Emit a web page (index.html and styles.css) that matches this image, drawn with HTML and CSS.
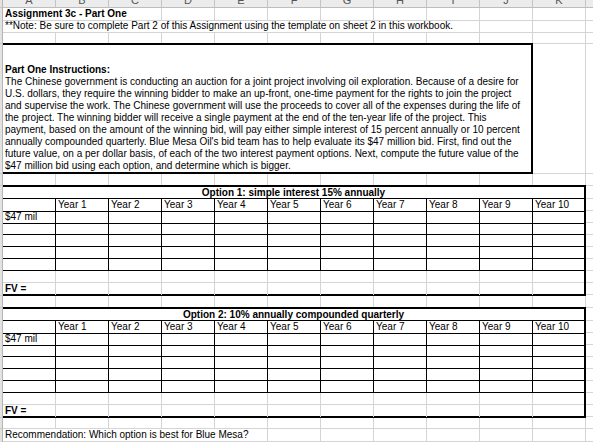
FILE: index.html
```html
<!DOCTYPE html>
<html>
<head>
<meta charset="utf-8">
<title>Assignment 3c - Part One</title>
<link rel="stylesheet" href="styles.css">
</head>
<body>
<div class="sheet">
  <div class="row head">
    <div class="strip"></div>
    <div class="h"><span>A</span></div><div class="h"><span>B</span></div><div class="h"><span>C</span></div><div class="h"><span>D</span></div><div class="h"><span>E</span></div><div class="h"><span>F</span></div><div class="h"><span>G</span></div><div class="h"><span>H</span></div><div class="h"><span>I</span></div><div class="h"><span>J</span></div><div class="h"><span>K</span></div><div class="h last"></div>
  </div>

  <div class="row">
    <div class="strip"></div>
    <div class="c b span3">Assignment 3c - Part One</div>
    <div class="c"></div><div class="c"></div><div class="c"></div><div class="c"></div><div class="c"></div><div class="c"></div><div class="c"></div><div class="c"></div>
    <div class="c last"></div>
  </div>

  <div class="row">
    <div class="strip"></div>
    <div class="c span9">**Note: Be sure to complete Part 2 of this Assignment using the template on sheet 2 in this workbook.</div>
    <div class="c"></div><div class="c"></div>
    <div class="c last"></div>
  </div>

  <div class="row">
    <div class="strip"></div>
    <div class="c"></div><div class="c"></div><div class="c"></div><div class="c"></div><div class="c"></div><div class="c"></div><div class="c"></div><div class="c"></div><div class="c"></div><div class="c"></div><div class="c"></div>
    <div class="c last"></div>
  </div>

  <div class="row boxrow">
    <div class="strip"></div>
    <div class="box span10">
      <div class="ln b">Part One Instructions:</div>
      <div class="ln">The Chinese government is conducting an auction for a joint project involving oil exploration. Because of a desire for</div>
      <div class="ln">U.S. dollars, they require the winning bidder to make an up-front, one-time payment for the rights to join the project</div>
      <div class="ln">and supervise the work. The Chinese government will use the proceeds to cover all of the expenses during the life of</div>
      <div class="ln">the project. The winning bidder will receive a single payment at the end of the ten-year life of the project. This</div>
      <div class="ln">payment, based on the amount of the winning bid, will pay either simple interest of 15 percent annually or 10 percent</div>
      <div class="ln">annually compounded quarterly. Blue Mesa Oil's bid team has to help evaluate its $47 million bid. First, find out the</div>
      <div class="ln">future value, on a per dollar basis, of each of the two interest payment options. Next, compute the future value of the</div>
      <div class="ln">$47 million bid using each option, and determine which is bigger.</div>
    </div>
    <div class="c"></div>
    <div class="c last"></div>
  </div>

  <div class="row">
    <div class="strip"></div>
    <div class="c"></div><div class="c"></div><div class="c"></div><div class="c"></div><div class="c"></div><div class="c"></div><div class="c"></div><div class="c"></div><div class="c"></div><div class="c"></div><div class="c"></div>
    <div class="c last"></div>
  </div>

  <div class="row tblrow">
    <div class="strip"></div>
    <div class="tbl span11">
      <div class="ttl">Option 1: simple interest 15% annually</div>
      <div class="tr"><div class="td"></div><div class="td">Year 1</div><div class="td">Year 2</div><div class="td">Year 3</div><div class="td">Year 4</div><div class="td">Year 5</div><div class="td">Year 6</div><div class="td">Year 7</div><div class="td">Year 8</div><div class="td">Year 9</div><div class="td">Year 10</div></div>
      <div class="tr"><div class="td">$47 mil</div><div class="td"></div><div class="td"></div><div class="td"></div><div class="td"></div><div class="td"></div><div class="td"></div><div class="td"></div><div class="td"></div><div class="td"></div><div class="td"></div></div>
      <div class="tr"><div class="td"></div><div class="td"></div><div class="td"></div><div class="td"></div><div class="td"></div><div class="td"></div><div class="td"></div><div class="td"></div><div class="td"></div><div class="td"></div><div class="td"></div></div>
      <div class="tr"><div class="td"></div><div class="td"></div><div class="td"></div><div class="td"></div><div class="td"></div><div class="td"></div><div class="td"></div><div class="td"></div><div class="td"></div><div class="td"></div><div class="td"></div></div>
      <div class="tr"><div class="td"></div><div class="td"></div><div class="td"></div><div class="td"></div><div class="td"></div><div class="td"></div><div class="td"></div><div class="td"></div><div class="td"></div><div class="td"></div><div class="td"></div></div>
      <div class="tr"><div class="td"></div><div class="td"></div><div class="td"></div><div class="td"></div><div class="td"></div><div class="td"></div><div class="td"></div><div class="td"></div><div class="td"></div><div class="td"></div><div class="td"></div></div>
      <div class="tr grey"><div class="td"></div><div class="td"></div><div class="td"></div><div class="td"></div><div class="td"></div><div class="td"></div><div class="td"></div><div class="td"></div><div class="td"></div><div class="td"></div><div class="td"></div></div>
      <div class="tr grey fv"><div class="td b">FV =</div><div class="td"></div><div class="td"></div><div class="td"></div><div class="td"></div><div class="td"></div><div class="td"></div><div class="td"></div><div class="td"></div><div class="td"></div><div class="td"></div></div>
    </div>
    <div class="lcol">
      <div class="lc first"></div><div class="lc"></div><div class="lc"></div><div class="lc"></div><div class="lc"></div><div class="lc"></div><div class="lc"></div><div class="lc"></div><div class="lc"></div>
    </div>
  </div>

  <div class="row">
    <div class="strip"></div>
    <div class="c"></div><div class="c"></div><div class="c"></div><div class="c"></div><div class="c"></div><div class="c"></div><div class="c"></div><div class="c"></div><div class="c"></div><div class="c"></div><div class="c"></div>
    <div class="c last"></div>
  </div>

  <div class="row tblrow">
    <div class="strip"></div>
    <div class="tbl span11">
      <div class="ttl">Option 2: 10% annually compounded quarterly</div>
      <div class="tr"><div class="td"></div><div class="td">Year 1</div><div class="td">Year 2</div><div class="td">Year 3</div><div class="td">Year 4</div><div class="td">Year 5</div><div class="td">Year 6</div><div class="td">Year 7</div><div class="td">Year 8</div><div class="td">Year 9</div><div class="td">Year 10</div></div>
      <div class="tr"><div class="td">$47 mil</div><div class="td"></div><div class="td"></div><div class="td"></div><div class="td"></div><div class="td"></div><div class="td"></div><div class="td"></div><div class="td"></div><div class="td"></div><div class="td"></div></div>
      <div class="tr"><div class="td"></div><div class="td"></div><div class="td"></div><div class="td"></div><div class="td"></div><div class="td"></div><div class="td"></div><div class="td"></div><div class="td"></div><div class="td"></div><div class="td"></div></div>
      <div class="tr"><div class="td"></div><div class="td"></div><div class="td"></div><div class="td"></div><div class="td"></div><div class="td"></div><div class="td"></div><div class="td"></div><div class="td"></div><div class="td"></div><div class="td"></div></div>
      <div class="tr"><div class="td"></div><div class="td"></div><div class="td"></div><div class="td"></div><div class="td"></div><div class="td"></div><div class="td"></div><div class="td"></div><div class="td"></div><div class="td"></div><div class="td"></div></div>
      <div class="tr"><div class="td"></div><div class="td"></div><div class="td"></div><div class="td"></div><div class="td"></div><div class="td"></div><div class="td"></div><div class="td"></div><div class="td"></div><div class="td"></div><div class="td"></div></div>
      <div class="tr grey"><div class="td"></div><div class="td"></div><div class="td"></div><div class="td"></div><div class="td"></div><div class="td"></div><div class="td"></div><div class="td"></div><div class="td"></div><div class="td"></div><div class="td"></div></div>
      <div class="tr grey fv"><div class="td b">FV =</div><div class="td"></div><div class="td"></div><div class="td"></div><div class="td"></div><div class="td"></div><div class="td"></div><div class="td"></div><div class="td"></div><div class="td"></div><div class="td"></div></div>
    </div>
    <div class="lcol">
      <div class="lc first"></div><div class="lc"></div><div class="lc"></div><div class="lc"></div><div class="lc"></div><div class="lc"></div><div class="lc"></div><div class="lc"></div><div class="lc"></div>
    </div>
  </div>

  <div class="row short">
    <div class="strip"></div>
    <div class="c"></div><div class="c"></div><div class="c"></div><div class="c"></div><div class="c"></div><div class="c"></div><div class="c"></div><div class="c"></div><div class="c"></div><div class="c"></div><div class="c"></div>
    <div class="c last"></div>
  </div>

  <div class="row">
    <div class="strip"></div>
    <div class="c span5">Recommendation: Which option is best for Blue Mesa?</div>
    <div class="c"></div><div class="c"></div><div class="c"></div><div class="c"></div><div class="c"></div><div class="c"></div>
    <div class="c last"></div>
  </div>

  <div class="row">
    <div class="strip"></div>
    <div class="c"></div><div class="c"></div><div class="c"></div><div class="c"></div><div class="c"></div><div class="c"></div><div class="c"></div><div class="c"></div><div class="c"></div><div class="c"></div><div class="c"></div>
    <div class="c last"></div>
  </div>
</div>
</body>
</html>
```

FILE: styles.css
```css
* {
  box-sizing: border-box;
  margin: 0;
  padding: 0;
}

html, body {
  background: #ffffff;
}

body {
  margin: 0;
  width: 593px;
  height: 442px;
  overflow: hidden;
  font-family: "Liberation Sans", Arial, sans-serif;
  font-size: 10px;
  color: #000000;
}

.sheet {
  display: flex;
  flex-direction: column;
}

.row {
  display: grid;
  grid-template-columns: 3px repeat(11, 53px) 1fr;
  height: 12px;
  flex: none;
}

.row.short {
  height: 11px;
}

.strip {
  background: #e2e2e2;
  border-right: 1px solid #b4b4b4;
  border-bottom: 1px solid #c9c9c9;
}

/* column headers */
.head {
  height: 8px;
}

.h {
  background: #ececec;
  border-right: 1px solid #c4c4c4;
  border-bottom: 1px solid #bdbdbd;
  text-align: center;
  font-size: 11px;
  line-height: 12px;
  color: #555555;
  overflow: hidden;
}

.h span {
  display: block;
  margin-top: -6px;
}

/* ordinary cells */
.c {
  border-right: 1px solid #d4d4d4;
  border-bottom: 1px solid #d4d4d4;
  line-height: 12px;
  padding-left: 2px;
  white-space: nowrap;
  overflow: visible;
}

.last {
  border-right: 0;
}

.b {
  font-weight: bold;
}

.span3 { grid-column: span 3; }
.span5 { grid-column: span 5; }
.span9 { grid-column: span 9; }
.span10 { grid-column: span 10; }
.span11 { grid-column: span 11; }

/* instruction box */
.boxrow {
  height: 130px;
}

.box {
  margin-top: -1px;
  height: 131px;
  border-top: 2px solid #000;
  border-right: 2px solid #000;
  border-bottom: 2px solid #000;
  display: flex;
  flex-direction: column;
  justify-content: flex-end;
  padding-left: 2px;
}

.ln {
  line-height: 12px;
  white-space: nowrap;
}

/* bordered tables */
.tblrow {
  height: 110px;
}

.tbl {
  margin-top: -1px;
  height: 111px;
  border-top: 2px solid #000;
  border-right: 2px solid #000;
  border-bottom: 2px solid #000;
  display: flex;
  flex-direction: column;
}

.ttl {
  height: 12px;
  flex: none;
  border-bottom: 1px solid #000;
  text-align: center;
  font-weight: bold;
  line-height: 12px;
  white-space: nowrap;
}

.tr {
  display: grid;
  grid-template-columns: repeat(10, 53px) 1fr;
  height: 12px;
  flex: none;
}

.td {
  border-right: 1px solid #000;
  border-bottom: 1px solid #000;
  line-height: 12px;
  padding-left: 2px;
  white-space: nowrap;
}

.td:last-child {
  border-right: 0;
}

.tr.grey .td {
  border-color: #d4d4d4;
}

.tr.grey .td:last-child {
  border-right: 0;
}

.tr.fv {
  height: 11px;
}

.tr.fv .td {
  border-bottom: 0;
}

.lcol {
  display: flex;
  flex-direction: column;
}

.lc {
  height: 12px;
  flex: none;
  border-bottom: 1px solid #d4d4d4;
}

.lc.first {
  height: 13px;
}
```
